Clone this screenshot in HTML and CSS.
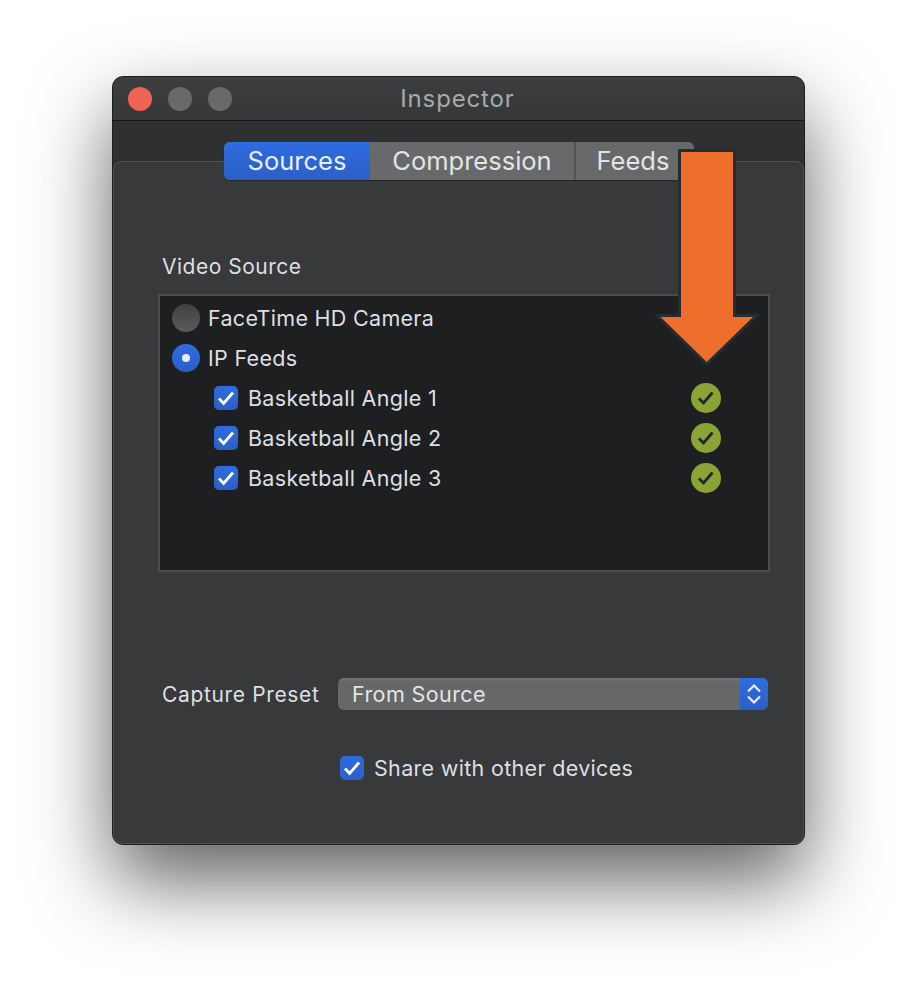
FILE: index.html
```html
<!DOCTYPE html>
<html>
<head>
	<meta charset="utf-8">
	<meta name="viewport" content="width=device-width, initial-scale=1">
	<title>Inspector</title>
	<link rel="stylesheet" href="styles.css">
</head>
<body>
	<div class="window">
		<div class="titlebar">
			<div class="lights">
				<span class="light light-close"></span>
				<span class="light"></span>
				<span class="light"></span>
			</div>
			<div class="title">Inspector</div>
		</div>
		<div class="content">
			<div class="panel">
				<div class="tabs">
					<div class="tab tab-active">Sources</div>
					<div class="tab tab-compression">Compression</div>
					<div class="tab tab-feeds">Feeds</div>
				</div>
				<div class="label-video">Video Source</div>
				<div class="source-box">
					<div class="row">
						<span class="radio"></span>
						<span>FaceTime HD Camera</span>
					</div>
					<div class="row">
						<span class="radio radio-on"><span class="radio-dot"></span></span>
						<span>IP Feeds</span>
					</div>
					<div class="row row-feed">
						<span class="check"><svg viewBox="0 0 24 24" width="24" height="24"><path d="M5 12.500l4.600 5L19 6.500" fill="none" stroke="#fff" stroke-width="2.800"/></svg></span>
						<span class="feed-name">Basketball Angle 1</span>
						<span class="status"><svg viewBox="0 0 30 30" width="30" height="30"><circle cx="15" cy="15" r="15" fill="#8aa535"/><path d="M8 15.500l4.500 4.500L21.500 9.500" fill="none" stroke="#23262a" stroke-width="2.800"/></svg></span>
					</div>
					<div class="row row-feed">
						<span class="check"><svg viewBox="0 0 24 24" width="24" height="24"><path d="M5 12.500l4.600 5L19 6.500" fill="none" stroke="#fff" stroke-width="2.800"/></svg></span>
						<span class="feed-name">Basketball Angle 2</span>
						<span class="status"><svg viewBox="0 0 30 30" width="30" height="30"><circle cx="15" cy="15" r="15" fill="#8aa535"/><path d="M8 15.500l4.500 4.500L21.500 9.500" fill="none" stroke="#23262a" stroke-width="2.800"/></svg></span>
					</div>
					<div class="row row-feed">
						<span class="check"><svg viewBox="0 0 24 24" width="24" height="24"><path d="M5 12.500l4.600 5L19 6.500" fill="none" stroke="#fff" stroke-width="2.800"/></svg></span>
						<span class="feed-name">Basketball Angle 3</span>
						<span class="status"><svg viewBox="0 0 30 30" width="30" height="30"><circle cx="15" cy="15" r="15" fill="#8aa535"/><path d="M8 15.500l4.500 4.500L21.500 9.500" fill="none" stroke="#23262a" stroke-width="2.800"/></svg></span>
					</div>
				</div>
				<div class="preset">
					<span class="preset-label">Capture Preset</span>
					<div class="select">
						<span class="select-value">From Source</span>
						<span class="select-arrows"><svg viewBox="0 0 28 32" width="28" height="32"><path d="M8 13.500l6-6 6 6M8 18.500l6 6 6-6" fill="none" stroke="#e6ecfa" stroke-width="2.200"/></svg></span>
					</div>
				</div>
				<div class="share">
					<span class="check"><svg viewBox="0 0 24 24" width="24" height="24"><path d="M5 12.500l4.600 5L19 6.500" fill="none" stroke="#fff" stroke-width="2.800"/></svg></span>
					<span>Share with other devices</span>
				</div>
			</div>
		</div>
		<svg class="arrow" viewBox="0 0 112 232" width="112" height="232">
			<path d="M31 12H83V177H103L56.700 222 10.600 177H31Z" fill="#ee6f2c" stroke="#262c33" stroke-width="6" paint-order="stroke"/>
		</svg>
	</div>
</body>
</html>
```

FILE: styles.css
```css
html, body {
	margin: 0;
	padding: 0;
}

body {
	height: 992px;
	overflow: hidden;
	background-color: #ffffff;
	font-family: "Inter", "Liberation Sans", sans-serif;
	color: #dfdfe0;
}

.window {
	position: relative;
	box-sizing: border-box;
	width: 693px;
	height: 769px;
	margin: 76px 0 0 112px;
	background-color: #2f3032;
	border-radius: 11px;
	border: 1px solid #1d1e20;
	box-shadow: 0 36px 80px rgba(0, 0, 0, 0.62);
}

.titlebar {
	position: relative;
	display: flex;
	align-items: center;
	height: 43px;
	background: linear-gradient(#3d3e40, #363739);
	border-bottom: 1px solid #131416;
	border-radius: 10px 10px 0 0;
}

.lights {
	display: flex;
	gap: 16px;
	padding-left: 15px;
}

.light {
	width: 24px;
	height: 24px;
	border-radius: 50%;
	background-color: #69696b;
}

.light-close {
	background-color: #ef6256;
}

.title {
	position: absolute;
	left: 0;
	right: 2px;
	text-align: center;
	font-size: 24px;
	letter-spacing: 0.85px;
	color: #a8a9aa;
}

.content {
	box-sizing: border-box;
	height: 723px;
	padding-top: 40px;
	background-color: #2f3032;
	border-radius: 0 0 10px 10px;
}

.panel {
	box-sizing: border-box;
	height: 683px;
	border: 1px solid #4f5052;
	border-radius: 8px 8px 10px 10px;
	background-color: #38393b;
}

.tabs {
	display: flex;
	width: 470px;
	height: 38px;
	margin: -20px 0 0 110px;
	border-radius: 6px;
	background-color: #68696b;
	font-size: 25.500px;
	line-height: 38px;
	text-align: center;
	color: #e4e4e5;
	box-shadow: 0 1px 1px rgba(0, 0, 0, 0.3);
}

.tab {
	box-sizing: border-box;
}

.tab-active {
	width: 146px;
	border-radius: 6px 0 0 6px;
	background: linear-gradient(#2f6ce0, #2b5fc6);
	color: #e8eefb;
}

.tab-compression {
	width: 206px;
	border-right: 2px solid #525355;
}

.tab-feeds {
	width: 118px;
	padding-right: 4px;
}

.label-video {
	margin: 67px 0 0 48px;
	height: 40px;
	font-size: 21px;
	line-height: 40px;
	letter-spacing: 0.5px;
}

.source-box {
	box-sizing: border-box;
	width: 612px;
	height: 278px;
	margin: 7px 0 0 44px;
	padding: 2px 0 0 12px;
	background-color: #1e1f21;
	border: 2px solid #4c4d4f;
}

.row {
	display: flex;
	align-items: center;
	gap: 8px;
	height: 40px;
	font-size: 21.500px;
	letter-spacing: 0.3px;
}

.row-feed {
	padding-left: 42px;
	gap: 10px;
}

.radio {
	display: flex;
	align-items: center;
	justify-content: center;
	width: 28px;
	height: 28px;
	border-radius: 50%;
	background: linear-gradient(#404143, #5a5a5c);
}

.radio-on {
	background: linear-gradient(#2f6ce0, #2b5fc6);
}

.radio-dot {
	width: 8px;
	height: 8px;
	border-radius: 50%;
	background-color: #e6ecfa;
}

.check {
	flex: none;
	display: block;
	width: 24px;
	height: 24px;
	border-radius: 5px;
	background: linear-gradient(#2f6ce0, #2b5fc6);
}

.check svg {
	display: block;
}

.feed-name {
	width: 433px;
}

.status {
	display: block;
	width: 30px;
	height: 30px;
}

.status svg {
	display: block;
}

.preset {
	display: flex;
	align-items: center;
	height: 32px;
	margin: 106px 0 0 48px;
}

.preset-label {
	width: 176px;
	font-size: 21px;
	letter-spacing: 0.65px;
}

.select {
	display: flex;
	align-items: center;
	justify-content: space-between;
	width: 430px;
	height: 32px;
	border-radius: 6px;
	background: linear-gradient(#747576, #666768 12%);
	font-size: 21.500px;
	letter-spacing: 0.4px;
	color: #e4e4e5;
}

.select-value {
	padding-left: 14px;
}

.select-arrows {
	display: block;
	width: 28px;
	height: 32px;
	border-radius: 0 6px 6px 0;
	background: linear-gradient(#2f6ce0, #2b5fc6);
}

.select-arrows svg {
	display: block;
}

.share {
	display: flex;
	align-items: center;
	gap: 10px;
	height: 30px;
	margin: 43px 0 0 226px;
	font-size: 21.500px;
	letter-spacing: 0.32px;
}

/* flecha encima de la ventana */
.arrow {
	position: absolute;
	left: 537px;
	top: 63px;
	overflow: visible;
}
```
